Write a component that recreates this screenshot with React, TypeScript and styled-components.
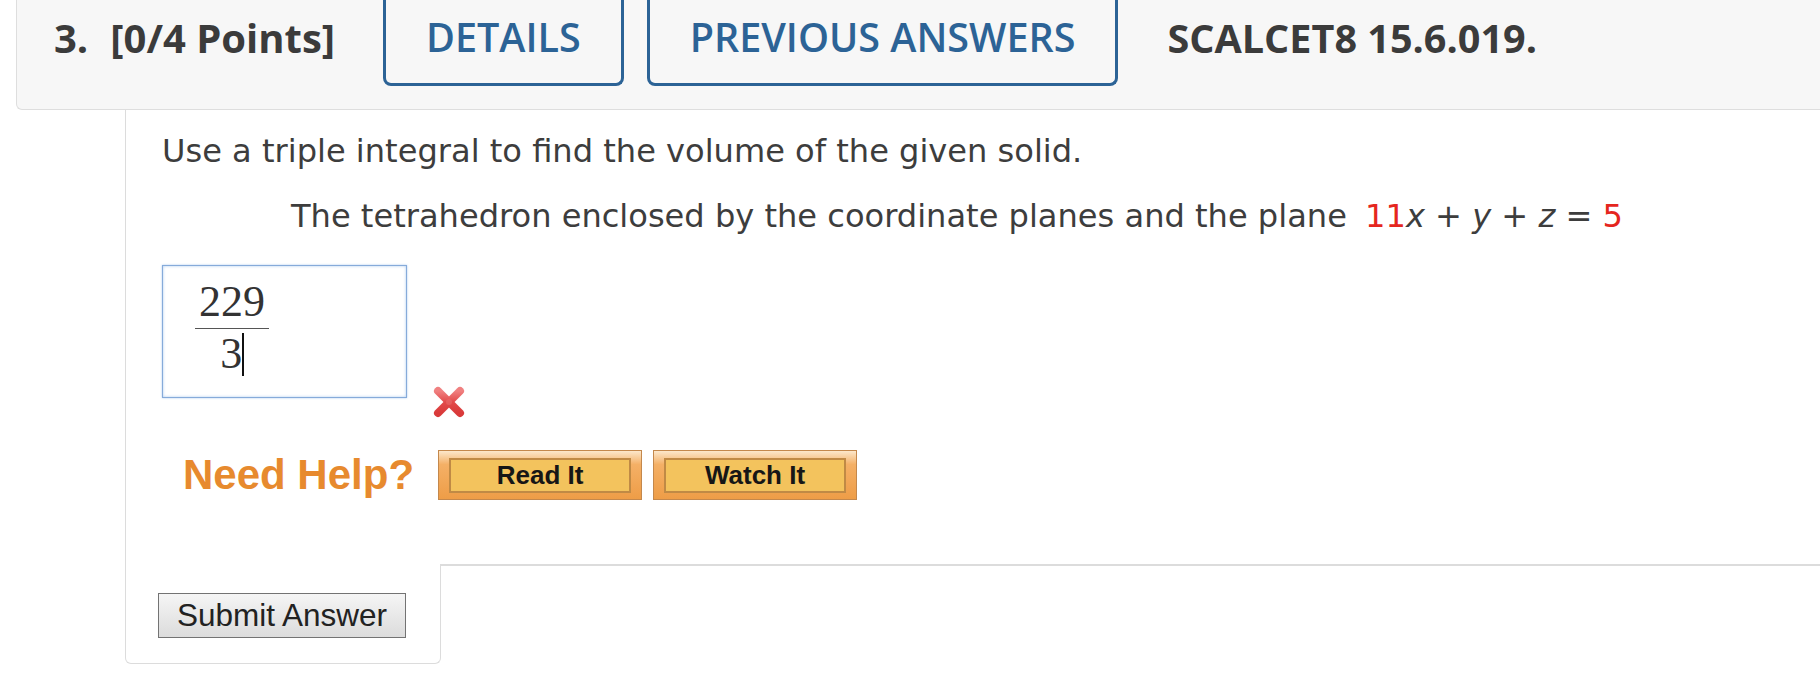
import React from "react";
import styled, { createGlobalStyle } from "styled-components";

const Global = createGlobalStyle`
  html, body { margin: 0; padding: 0; background: #ffffff; }
  body { width: 1820px; height: 674px; overflow: hidden; }
  #root { width: 1820px; }
`;

const Page = styled.div`
  display: flex;
  flex-direction: column;
`;

const Header = styled.header`
  margin-left: 16px;
  height: 110px;
  box-sizing: border-box;
  background: #f7f7f7;
  border-left: 1px solid #dedede;
  border-bottom: 1px solid #dedede;
  border-bottom-left-radius: 6px;
  display: flex;
  align-items: flex-start;
  font-family: "Open Sans", sans-serif;
  font-size: 40px;
  line-height: 48px;
  white-space: nowrap;
`;

const Title = styled.div`
  box-sizing: border-box;
  width: 366px;
  padding: 14px 0 0 37px;
  font-weight: 700;
  color: #3b3b3b;
`;

const QNum = styled.span`
  margin-right: 22px;
`;

const Tab = styled.div<{ $gap: number }>`
  box-sizing: border-box;
  height: 86px;
  padding: 13px 40px 0;
  margin-right: ${(p) => p.$gap}px;
  border: 3px solid #2c6396;
  border-top: none;
  border-radius: 0 0 8px 8px;
  color: #2c6396;
  font-size: 39.5px;
  font-weight: 600;
`;

const ProblemId = styled.div`
  padding-top: 14px;
  font-size: 39.6px;
  font-weight: 700;
  color: #3b3b3b;
`;

const Body = styled.main`
  margin-left: 125px;
  border-left: 1px solid #dcdcdc;
  border-bottom: 2px solid #dcdcdc;
  padding: 23px 0 64px 36px;
  font-family: "DejaVu Sans", Verdana, sans-serif;
  color: #3d3d3d;
`;

const Prompt = styled.p<{ $indent?: number; $top?: number }>`
  margin: ${(p) => p.$top ?? 0}px 0 0;
  padding-left: ${(p) => p.$indent ?? 0}px;
  font-size: 32.1px;
  line-height: 36px;
  white-space: nowrap;
`;

const MathExpr = styled.span`
  margin-left: 8px;
`;

const Red = styled.span`
  color: #e5261e;
`;

const Var = styled.span`
  font-style: italic;
`;

const AnswerRow = styled.div`
  margin-top: 31px;
  display: flex;
  align-items: flex-start;
`;

const AnswerBox = styled.div`
  box-sizing: border-box;
  width: 245px;
  height: 133px;
  padding: 14px 0 0 32px;
  border: 1px solid #86abda;
  box-shadow: inset 0 0 3px #aecbef, 0 0 2px #aecbef;
  background: #fff;
`;

const Fraction = styled.div`
  display: inline-flex;
  flex-direction: column;
  align-items: center;
  font-family: "Liberation Serif", "Times New Roman", serif;
  font-size: 44px;
  line-height: 44px;
  color: #333;
`;

const FracBar = styled.div`
  width: 74px;
  border-top: 1.5px solid #555;
  margin: 4px 0 3px;
`;

const Caret = styled.span`
  display: inline-block;
  width: 1.5px;
  height: 43px;
  background: #111;
  vertical-align: -8px;
`;

const WrongMark = styled.svg`
  margin: 120px 0 0 25px;
  flex: none;
`;

const HelpRow = styled.div`
  margin-top: 31px;
  padding-left: 21px;
  display: flex;
  align-items: center;
`;

const NeedHelp = styled.span`
  font-family: "Liberation Sans", Arial, sans-serif;
  font-weight: 700;
  font-size: 42px;
  color: #e78a2e;
  margin-right: 24px;
`;

const HelpButton = styled.button<{ $gap?: number }>`
  box-sizing: border-box;
  width: 204px;
  height: 50px;
  margin: 0 0 0 ${(p) => p.$gap ?? 0}px;
  padding: 7px 10px 6px;
  border: 1px solid #c4884c;
  background: linear-gradient(to bottom, #fce7cb 0%, #f4b066 28%, #ee9d47 100%);
  cursor: pointer;
`;

const HelpFace = styled.span`
  box-sizing: border-box;
  display: flex;
  align-items: center;
  justify-content: center;
  height: 100%;
  border: 2px solid #c08a45;
  background: #f3c35d;
  font-family: "Liberation Sans", Arial, sans-serif;
  font-weight: 700;
  font-size: 26px;
  color: #161616;
`;

const SubmitArea = styled.div`
  position: relative;
  margin: -2px 0 0 125px;
  width: 316px;
  height: 100px;
  box-sizing: border-box;
  padding: 29px 0 0 32px;
  border: 1px solid #dcdcdc;
  border-top: none;
  border-radius: 0 0 6px 6px;
  background: #fff;
`;

const SubmitButton = styled.button`
  box-sizing: border-box;
  width: 248px;
  height: 45px;
  padding: 0;
  border: 1px solid #737373;
  background: linear-gradient(to bottom, #f5f5f5, #dcdcdc);
  font-family: "Liberation Sans", Arial, sans-serif;
  font-size: 31.5px;
  color: #222;
  cursor: pointer;
`;

export default function App() {
  return (
    <Page>
      <Global />
      <Header>
        <Title>
          <QNum>3.</QNum>[0/4 Points]
        </Title>
        <Tab $gap={23}>DETAILS</Tab>
        <Tab $gap={49}>PREVIOUS ANSWERS</Tab>
        <ProblemId>SCALCET8 15.6.019.</ProblemId>
      </Header>
      <Body>
        <Prompt>Use a triple integral to find the volume of the given solid.</Prompt>
        <Prompt $indent={129} $top={29}>
          The tetrahedron enclosed by the coordinate planes and the plane{" "}
          <MathExpr>
            <Red>11</Red>
            <Var>x</Var> + <Var>y</Var> + <Var>z</Var> = <Red>5</Red>
          </MathExpr>
        </Prompt>
        <AnswerRow>
          <AnswerBox>
            <Fraction>
              <span>229</span>
              <FracBar />
              <span>
                3<Caret />
              </span>
            </Fraction>
          </AnswerBox>
          <WrongMark width="34" height="34" viewBox="0 0 34 34">
            <defs>
              <linearGradient id="xg" x1="0" y1="0" x2="0" y2="1">
                <stop offset="0" stopColor="#f08080" />
                <stop offset="0.5" stopColor="#e24a4a" />
                <stop offset="1" stopColor="#d93a3a" />
              </linearGradient>
            </defs>
            <g stroke="url(#xg)" strokeWidth="8" strokeLinecap="round">
              <line x1="6" y1="6" x2="28" y2="28" />
              <line x1="28" y1="6" x2="6" y2="28" />
            </g>
            <circle cx="17" cy="17" r="3" fill="#e86a6a" opacity="0.6" />
          </WrongMark>
        </AnswerRow>
        <HelpRow>
          <NeedHelp>Need Help?</NeedHelp>
          <HelpButton>
            <HelpFace>Read It</HelpFace>
          </HelpButton>
          <HelpButton $gap={11}>
            <HelpFace>Watch It</HelpFace>
          </HelpButton>
        </HelpRow>
      </Body>
      <SubmitArea>
        <SubmitButton>Submit Answer</SubmitButton>
      </SubmitArea>
    </Page>
  );
}
